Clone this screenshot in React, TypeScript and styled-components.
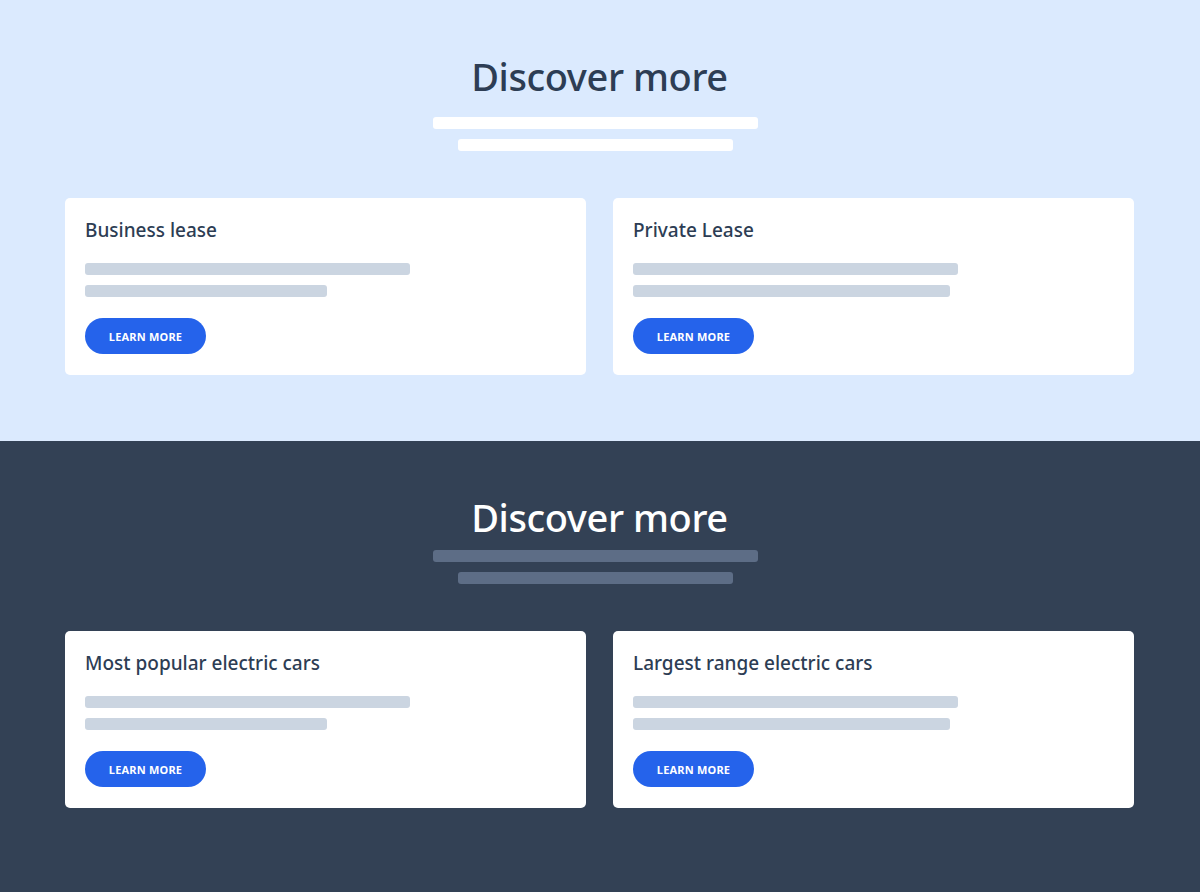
import React, { FC } from "react";
import styled, { createGlobalStyle } from "styled-components";

const GlobalStyle = createGlobalStyle`
  html, body {
    margin: 0;
    padding: 0;
  }
  body {
    font-family: "Noto Sans", "Open Sans", Arial, sans-serif;
    -webkit-font-smoothing: antialiased;
  }
`;

type Tone = "light" | "dark";

const Section = styled.section<{ $tone: Tone }>`
  background: ${p => (p.$tone === "light" ? "#dbeafe" : "#334155")};
  padding: 56px 66px ${p => (p.$tone === "light" ? "66px" : "84px")} 65px;
`;

const Header = styled.header`
  display: flex;
  flex-direction: column;
  align-items: center;
`;

const Heading = styled.h2<{ $tone: Tone }>`
  margin: 0;
  font-size: 38px;
  line-height: 40px;
  font-weight: 500;
  letter-spacing: -0.4px;
  color: ${p => (p.$tone === "light" ? "#2d3d54" : "#ffffff")};
`;

const BarStack = styled.div<{ $gapTop: number }>`
  display: flex;
  flex-direction: column;
  align-items: center;
  gap: 10px;
  margin-top: ${p => p.$gapTop}px;
  margin-right: 8px;
`;

const Bar = styled.div<{ $width: number; $color: string }>`
  width: ${p => p.$width}px;
  height: 12px;
  border-radius: 3px;
  background: ${p => p.$color};
`;

const CardGrid = styled.div`
  display: grid;
  grid-template-columns: 1fr 1fr;
  gap: 27px;
  margin-top: 47px;
`;

const Card = styled.article`
  background: #ffffff;
  border-radius: 5px;
  padding: 20px 20px 21px;
  display: flex;
  flex-direction: column;
  align-items: flex-start;
`;

const CardTitle = styled.h3`
  margin: 0;
  font-size: 19px;
  line-height: 24px;
  font-weight: 500;
  color: #2d3d54;
`;

const CardBars = styled.div`
  display: flex;
  flex-direction: column;
  gap: 10px;
  margin: 21px 0;
`;

const Button = styled.button`
  height: 36px;
  width: 121px;
  border: none;
  border-radius: 18px;
  background: #2563eb;
  color: #ffffff;
  font-family: inherit;
  font-size: 11px;
  font-weight: 700;
  letter-spacing: 0.2px;
  cursor: pointer;
  padding: 0;
`;

interface CardData {
  title: string;
  bars: [number, number];
}

const InfoCard: FC<CardData> = ({ title, bars }) => (
  <Card>
    <CardTitle>{title}</CardTitle>
    <CardBars>
      {bars.map((w, i) => (
        <Bar key={i} $width={w} $color="#cbd5e1" />
      ))}
    </CardBars>
    <Button>LEARN MORE</Button>
  </Card>
);

interface DiscoverProps {
  tone: Tone;
  cards: CardData[];
}

const Discover: FC<DiscoverProps> = ({ tone, cards }) => {
  const barColor = tone === "light" ? "#ffffff" : "#5d6d86";
  return (
    <Section $tone={tone}>
      <Header>
        <Heading $tone={tone}>Discover more</Heading>
        <BarStack $gapTop={tone === "light" ? 21 : 13}>
          <Bar $width={325} $color={barColor} />
          <Bar $width={275} $color={barColor} />
        </BarStack>
      </Header>
      <CardGrid>
        {cards.map(c => (
          <InfoCard key={c.title} {...c} />
        ))}
      </CardGrid>
    </Section>
  );
};

const App: FC = () => (
  <>
    <GlobalStyle />
    <Discover
      tone="light"
      cards={[
        { title: "Business lease", bars: [325, 242] },
        { title: "Private Lease", bars: [325, 317] },
      ]}
    />
    <Discover
      tone="dark"
      cards={[
        { title: "Most popular electric cars", bars: [325, 242] },
        { title: "Largest range electric cars", bars: [325, 317] },
      ]}
    />
  </>
);

export default App;
